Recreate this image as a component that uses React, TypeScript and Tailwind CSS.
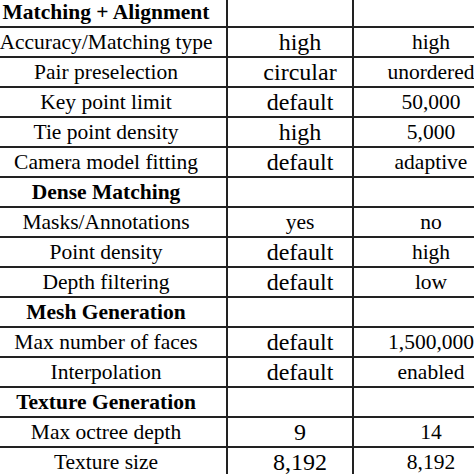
const rows: { label: string; a?: string; b?: string; head?: boolean; small?: boolean }[] = [
  { label: 'Matching + Alignment', head: true },
  { label: 'Accuracy/Matching type', a: 'high', b: 'high' },
  { label: 'Pair preselection', a: 'circular', b: 'unordered' },
  { label: 'Key point limit', a: 'default', b: '50,000' },
  { label: 'Tie point density', a: 'high', b: '5,000' },
  { label: 'Camera model fitting', a: 'default', b: 'adaptive' },
  { label: 'Dense Matching', head: true },
  { label: 'Masks/Annotations', a: 'yes', b: 'no', small: true },
  { label: 'Point density', a: 'default', b: 'high' },
  { label: 'Depth filtering', a: 'default', b: 'low' },
  { label: 'Mesh Generation', head: true },
  { label: 'Max number of faces', a: 'default', b: '1,500,000' },
  { label: 'Interpolation', a: 'default', b: 'enabled' },
  { label: 'Texture Generation', head: true },
  { label: 'Max octree depth', a: '9', b: '14' },
  { label: 'Texture size', a: '8,192', b: '8,192' },
]

export default function App() {
  return (
    <div className="w-[474px] h-[474px] overflow-hidden bg-white text-black font-['Liberation_Serif']">
      <div className="-mt-[2px] -ml-[14px] grid grid-cols-[242px_126px_154px] w-max">
        {rows.map((r) => (
          <div key={r.label} className="contents">
            <div
              className={
                'h-[30px] border-b-2 border-r-2 border-[#222] text-center leading-[28px] text-[21.5px] whitespace-nowrap ' +
                (r.head ? 'font-bold' : '')
              }
            >
              {r.label}
            </div>
            <div
              className={
                'h-[30px] border-b-2 border-r-2 border-[#222] pl-[20px] text-center leading-[28px] whitespace-nowrap ' +
                (r.small ? 'text-[21.5px]' : 'text-[24px]')
              }
            >
              {r.a}
            </div>
            <div className="h-[30px] border-b-2 border-[#222] text-center leading-[28px] text-[21.5px] whitespace-nowrap">
              {r.b}
            </div>
          </div>
        ))}
      </div>
    </div>
  )
}
